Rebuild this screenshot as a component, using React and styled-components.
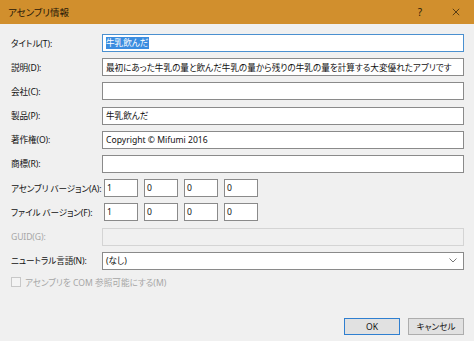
import React from "react";
import styled, { createGlobalStyle } from "styled-components";

const GlobalStyle = createGlobalStyle`
  html, body {
    margin: 0;
    padding: 0;
    background: #f0f0f0;
  }
  body {
    font-family: "Noto Sans", "Noto Sans CJK JP", sans-serif;
    font-feature-settings: "palt";
  }
`;

const fields = [
  { label: "タイトル(T):", value: "牛乳飲んだ", selected: true },
  {
    label: "説明(D):",
    value:
      "最初にあった牛乳の量と飲んだ牛乳の量から残りの牛乳の量を計算する大変優れたアプリです",
  },
  { label: "会社(C):", value: "" },
  { label: "製品(P):", value: "牛乳飲んだ" },
  { label: "著作権(O):", value: "Copyright © Mifumi 2016" },
  { label: "商標(R):", value: "" },
];

const App = () => {
  return (
    <Window>
      <GlobalStyle />
      <TitleBar>
        <Title>アセンブリ情報</Title>
        <TitleButtons>
          <Help>?</Help>
          <CloseIcon viewBox="0 0 10 10">
            <path d="M1 1 L9 9 M9 1 L1 9" stroke="#3a2a10" strokeWidth="1" />
          </CloseIcon>
        </TitleButtons>
      </TitleBar>

      <Body>
        <Form>
          {fields.map((f) => (
            <React.Fragment key={f.label}>
              <Label>{f.label}</Label>
              <TextBox focused={f.selected}>
                {f.selected ? <Selected>{f.value}</Selected> : f.value}
              </TextBox>
            </React.Fragment>
          ))}

          <Label>アセンブリ バージョン(A):</Label>
          <Versions>
            {["1", "0", "0", "0"].map((v, i) => (
              <VersionBox key={i}>{v}</VersionBox>
            ))}
          </Versions>

          <Label>ファイル バージョン(F):</Label>
          <Versions>
            {["1", "0", "0", "0"].map((v, i) => (
              <VersionBox key={i}>{v}</VersionBox>
            ))}
          </Versions>

          <Label disabled>GUID(G):</Label>
          <TextBox disabled />

          <Label>ニュートラル言語(N):</Label>
          <Select>
            <span>(なし)</span>
            <Chevron viewBox="0 0 8 5">
              <path d="M0.5 0.5 L4 4 L7.5 0.5" fill="none" stroke="#777" strokeWidth="1" />
            </Chevron>
          </Select>
        </Form>

        <CheckRow>
          <CheckBox />
          <CheckLabel>アセンブリを COM 参照可能にする(M)</CheckLabel>
        </CheckRow>

        <Footer>
          <Button primary>OK</Button>
          <Button>キャンセル</Button>
        </Footer>
      </Body>
    </Window>
  );
};

export default App;

const Window = styled.div`
  width: 474px;
  height: 341px;
  display: flex;
  flex-direction: column;
  background: #f0f0f0;
  overflow: hidden;
`;

const TitleBar = styled.div`
  height: 24px;
  flex-shrink: 0;
  background: #d18f2d;
  display: flex;
  align-items: center;
  justify-content: space-between;
  padding: 0 14px 0 8px;
`;

const Title = styled.div`
  font-size: 9.5px;
  color: #1e1608;
`;

const TitleButtons = styled.div`
  display: flex;
  align-items: center;
  gap: 30px;
`;

const Help = styled.span`
  font-size: 10px;
  color: #2a1c08;
`;

const CloseIcon = styled.svg`
  width: 8px;
  height: 8px;
`;

const Body = styled.div`
  flex: 1;
  display: flex;
  flex-direction: column;
  padding: 10px 10px 6px 11px;
`;

const Form = styled.div`
  display: grid;
  grid-template-columns: 91px 1fr;
  grid-auto-rows: 18px;
  row-gap: 6.2px;
  align-items: center;
`;

const Label = styled.div`
  font-size: 8.6px;
  letter-spacing: -0.1px;
  color: ${(p) => (p.disabled ? "#a6a6a6" : "#111")};
  white-space: nowrap;
`;

const TextBox = styled.div`
  height: 18px;
  box-sizing: border-box;
  border: 1px solid
    ${(p) => (p.focused ? "#4a90d0" : p.disabled ? "#d4d4d4" : "#8a8a8a")};
  background: ${(p) => (p.disabled ? "#f0f0f0" : "#fff")};
  display: flex;
  align-items: center;
  padding-left: 3px;
  font-size: 8.6px;
  color: #111;
  white-space: nowrap;
  overflow: hidden;
`;

const Selected = styled.span`
  background: #3b8de0;
  color: #fff;
  line-height: 12px;
`;

const Versions = styled.div`
  display: flex;
  gap: 6px;
  padding-left: 2px;
`;

const VersionBox = styled.div`
  width: 34px;
  height: 18px;
  box-sizing: border-box;
  border: 1px solid #8a8a8a;
  background: #fff;
  display: flex;
  align-items: center;
  padding-left: 2px;
  font-size: 8.6px;
  color: #111;
`;

const Select = styled(TextBox)`
  justify-content: space-between;
  padding-right: 6px;
`;

const Chevron = styled.svg`
  width: 8px;
  height: 5px;
`;

const CheckRow = styled.div`
  display: flex;
  align-items: center;
  gap: 4px;
  margin-top: 6px;
`;

const CheckBox = styled.div`
  width: 10px;
  height: 10px;
  box-sizing: border-box;
  border: 1px solid #c8c8c8;
  background: #f4f4f4;
`;

const CheckLabel = styled.span`
  font-size: 8.6px;
  color: #a6a6a6;
`;

const Footer = styled.div`
  margin-top: auto;
  display: flex;
  justify-content: flex-end;
  gap: 8px;
`;

const Button = styled.div`
  width: 56px;
  height: 17px;
  box-sizing: border-box;
  border: 1px solid ${(p) => (p.primary ? "#2f7fd0" : "#adadad")};
  background: #e1e1e1;
  display: flex;
  align-items: center;
  justify-content: center;
  font-size: 8.6px;
  color: #111;
`;
